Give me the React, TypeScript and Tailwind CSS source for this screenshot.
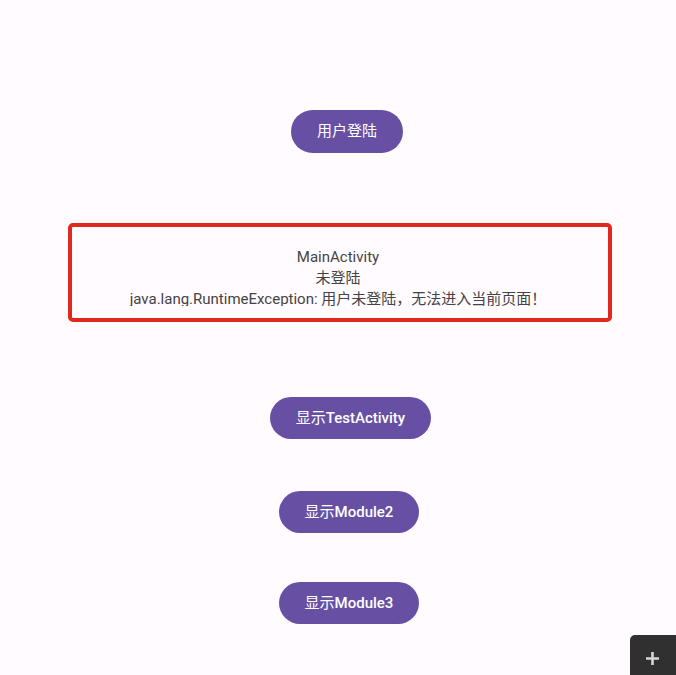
import React from 'react';

const PillButton: React.FC<{ zh: string; en?: string; className?: string }> = ({ zh, en, className = '' }) => {
    return (
        <button
            className={`h-[42px] px-[26px] rounded-full bg-[#6750a4] text-white text-[15px] leading-none flex items-center justify-center ${className}`}
        >
            <span className="font-normal">{zh}</span>
            {en && <span className="font-medium">{en}</span>}
        </button>
    );
};

const App: React.FC = () => {
    return (
        <div className="relative w-full min-h-[675px] overflow-hidden bg-[#fffbfe] font-['Roboto','Noto_Sans_CJK_SC',sans-serif] flex flex-col items-center pt-[110px]">
            {/* Login */}
            <PillButton zh="用户登陆" className="h-[43px] ml-[18px]" />

            {/* Status panel */}
            <div className="self-stretch ml-[68px] mr-[64px] mt-[70px] h-[99px] border-4 border-[#e2271f] rounded-[5px] pt-[20px]">
                <div className="h-[59px] overflow-hidden text-center text-[15px] leading-[21px] text-[#444444] pr-[4px]">
                    <div>MainActivity</div>
                    <div>未登陆</div>
                    <div>java.lang.RuntimeException: 用户未登陆，无法进入当前页面！</div>
                </div>
            </div>

            {/* Navigation */}
            <PillButton zh="显示" en="TestActivity" className="mt-[75px] h-[41px] ml-[25px]" />
            <PillButton zh="显示" en="Module2" className="mt-[52px] ml-[22px]" />
            <PillButton zh="显示" en="Module3" className="mt-[49px] ml-[22px]" />

            {/* Floating corner tile */}
            <div className="absolute left-[630px] top-[635px] w-[60px] h-[60px] bg-[#303030] rounded-tl-[5px] flex items-start justify-start">
                <svg className="ml-[15px] mt-[16px]" width="15" height="15" viewBox="0 0 15 15">
                    <path d="M7.5 1v13M1 7.5h13" stroke="#d6d6d6" strokeWidth="2.6" />
                </svg>
            </div>
        </div>
    );
};

export default App;
